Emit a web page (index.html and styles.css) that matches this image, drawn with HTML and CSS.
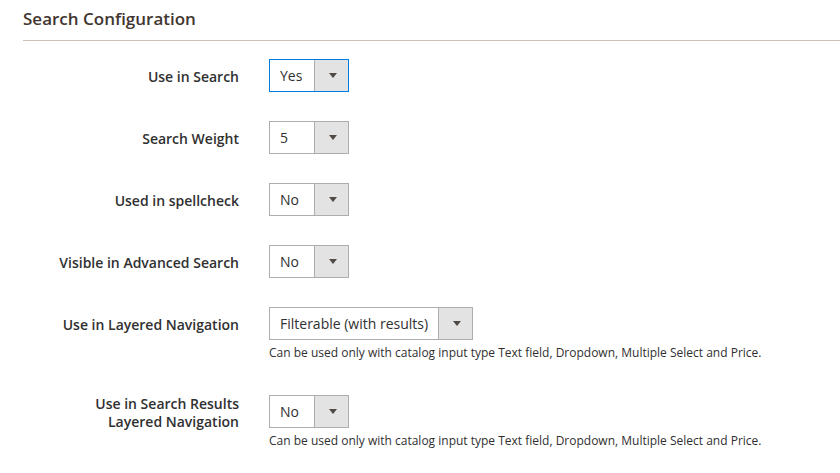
FILE: index.html
```html
<!DOCTYPE html>
<html lang="en">
<head>
    <meta charset="UTF-8">
    <meta name="viewport" content="width=device-width, initial-scale=1.0">
    <title>Search Configuration</title>
    <link rel="stylesheet" href="styles.css">
</head>
<body>
    <div class="fieldset">
        <div class="fieldset-title">Search Configuration</div>

        <div class="field">
            <div class="field-label"><span>Use in Search</span></div>
            <div class="field-control">
                <div class="select select-small is-focused">
                    <span class="select-value">Yes</span>
                    <span class="select-arrow"><svg width="8" height="5" viewBox="0 0 8 5"><path d="M0 0h8L4 5z"/></svg></span>
                </div>
            </div>
        </div>

        <div class="field">
            <div class="field-label"><span>Search Weight</span></div>
            <div class="field-control">
                <div class="select select-small">
                    <span class="select-value">5</span>
                    <span class="select-arrow"><svg width="8" height="5" viewBox="0 0 8 5"><path d="M0 0h8L4 5z"/></svg></span>
                </div>
            </div>
        </div>

        <div class="field">
            <div class="field-label"><span>Used in spellcheck</span></div>
            <div class="field-control">
                <div class="select select-small">
                    <span class="select-value">No</span>
                    <span class="select-arrow"><svg width="8" height="5" viewBox="0 0 8 5"><path d="M0 0h8L4 5z"/></svg></span>
                </div>
            </div>
        </div>

        <div class="field">
            <div class="field-label"><span>Visible in Advanced Search</span></div>
            <div class="field-control">
                <div class="select select-small">
                    <span class="select-value">No</span>
                    <span class="select-arrow"><svg width="8" height="5" viewBox="0 0 8 5"><path d="M0 0h8L4 5z"/></svg></span>
                </div>
            </div>
        </div>

        <div class="field">
            <div class="field-label"><span>Use in Layered Navigation</span></div>
            <div class="field-control">
                <div class="select select-wide">
                    <span class="select-value">Filterable (with results)</span>
                    <span class="select-arrow"><svg width="8" height="5" viewBox="0 0 8 5"><path d="M0 0h8L4 5z"/></svg></span>
                </div>
                <div class="field-note">Can be used only with catalog input type Text field, Dropdown, Multiple Select and Price.</div>
            </div>
        </div>

        <div class="field">
            <div class="field-label"><span>Use in Search Results<br>Layered Navigation</span></div>
            <div class="field-control">
                <div class="select select-small">
                    <span class="select-value">No</span>
                    <span class="select-arrow"><svg width="8" height="5" viewBox="0 0 8 5"><path d="M0 0h8L4 5z"/></svg></span>
                </div>
                <div class="field-note">Can be used only with catalog input type Text field, Dropdown, Multiple Select and Price.</div>
            </div>
        </div>
    </div>
</body>
</html>
```

FILE: styles.css
```css
body {
    margin: 0;
    font-family: 'Open Sans', 'Noto Sans', sans-serif;
    color: #303030;
    background: #fff;
}

.fieldset {
    padding-left: 23px;
}

.fieldset-title {
    font-size: 17px;
    font-weight: 600;
    color: #41362f;
    padding: 7px 0 10px;
    border-bottom: 1px solid #cac3b4;
    margin-bottom: 18px;
}

.field {
    display: grid;
    grid-template-columns: 216px 1fr;
    column-gap: 30px;
    margin-bottom: 29px;
}

.field-label {
    box-sizing: border-box;
    height: 33px;
    padding-top: 2px;
    display: flex;
    align-items: center;
    justify-content: flex-end;
    text-align: right;
    font-size: 14px;
    font-weight: 600;
    line-height: 18px;
}

.select {
    box-sizing: border-box;
    height: 33px;
    display: flex;
    border: 1px solid #adadad;
    font-size: 14px;
    background: #fff;
}

.select.is-focused {
    border-color: #007bdb;
}

.select-small {
    width: 80px;
}

.select-wide {
    width: 204px;
}

.select-value {
    flex: 1;
    padding-left: 10px;
    line-height: 32px;
    white-space: nowrap;
}

.select-arrow {
    width: 33px;
    border-left: 1px solid #adadad;
    background: #e3e3e3;
    display: flex;
    align-items: center;
    justify-content: center;
}

.select-arrow svg {
    fill: #514943;
    margin-left: 2px;
}

.field-note {
    font-size: 12px;
    line-height: 18px;
    margin-top: 4px;
    margin-bottom: 4px;
}
```
